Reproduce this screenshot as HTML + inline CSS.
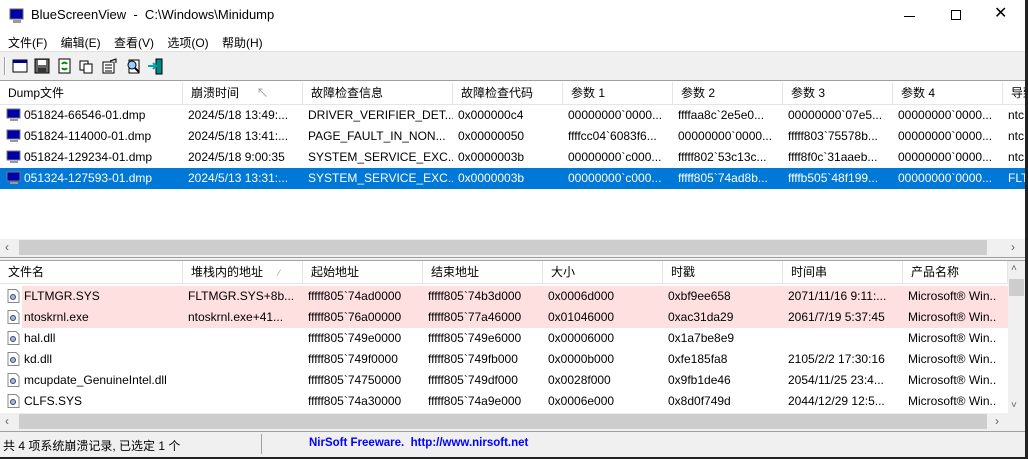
<!DOCTYPE html><html><head><meta charset="utf-8"><style>
*{margin:0;padding:0;box-sizing:border-box}
body{width:1028px;height:459px;overflow:hidden;background:#fff;font-family:"Liberation Sans","Noto Sans CJK SC",sans-serif;font-size:12px;color:#000;position:relative}
.a{position:absolute}
.row{position:absolute;left:0;height:21px;white-space:nowrap;overflow:hidden}
.row span{position:absolute;top:0;line-height:21px;overflow:hidden}
.hdr{position:absolute;left:0;height:23px;background:#fff;border-bottom:1px solid #e5e5e5;overflow:hidden;white-space:nowrap}
.hdr span{position:absolute;top:0;line-height:23px;padding-left:8px;border-right:1px solid #e5e5e5;height:23px}
.ico{position:absolute;left:6px;top:3px;width:15px;height:14px}
</style></head><body>
<svg class="a" style="left:9px;top:8px" width="16" height="16"><rect x="1" y="1" width="13" height="10" fill="#0000a8" stroke="#666"/><rect x="4" y="12" width="8" height="3" fill="#999"/></svg>
<div class="a" style="left:31px;top:7px;font-size:13px">BlueScreenView &nbsp;- &nbsp;C:\Windows\Minidump</div>
<div class="a" style="left:904px;top:16px;width:11px;height:1px;background:#000"></div>
<div class="a" style="left:951px;top:10px;width:10px;height:10px;border:1px solid #000"></div>
<div class="a" style="left:994px;top:4px;font-size:16px;line-height:20px">✕</div>
<div class="a" style="left:1025px;top:0;width:3px;height:459px;background:#222"></div>
<div class="a" style="left:8px;top:34px;font-size:12px">文件(F)&nbsp;&nbsp;&nbsp;&nbsp;编辑(E)&nbsp;&nbsp;&nbsp;&nbsp;查看(V)&nbsp;&nbsp;&nbsp;&nbsp;选项(O)&nbsp;&nbsp;&nbsp;&nbsp;帮助(H)</div>
<div class="a" style="left:0;top:51px;width:1025px;height:30px;background:#f0f0f0;border-top:1px solid #e0e0e0;border-bottom:1px solid #a0a0a0"></div>
<div class="a" style="left:4px;top:57px;width:2px;height:18px;border-left:1px solid #a0a0a0;border-right:1px solid #fff"></div>
<svg class="a" style="left:12px;top:58px" width="160" height="18">
<rect x="1" y="2" width="14" height="12" fill="#fff" stroke="#000"/><rect x="1" y="2" width="14" height="3" fill="#000080"/>
<rect x="23" y="1" width="14" height="14" fill="#666" stroke="#000"/><rect x="26" y="2" width="8" height="5" fill="#fff"/><rect x="26" y="10" width="8" height="5" fill="#333"/>
<rect x="47" y="1" width="11" height="14" fill="#fff" stroke="#000"/><path d="M50 6 a3 3 0 0 1 5 0 M55 10 a3 3 0 0 1 -5 0" stroke="#080" stroke-width="2" fill="none"/>
<rect x="68" y="3" width="8" height="9" fill="#fff" stroke="#000"/><rect x="72" y="6" width="8" height="9" fill="#fff" stroke="#000"/>
<rect x="91" y="4" width="11" height="11" fill="#fff" stroke="#000"/><path d="M93 7h7M93 10h7M93 13h7" stroke="#000"/><path d="M98 3l6-2v4" stroke="#000" fill="#ccc"/>
<rect x="117" y="2" width="10" height="13" fill="#fff" stroke="#000"/><circle cx="120" cy="7" r="4" fill="#9cf" stroke="#000"/><path d="M123 10l4 4" stroke="#000" stroke-width="2"/>
<rect x="144" y="1" width="6" height="15" fill="#088" stroke="#000"/><path d="M136 8h8M141 5l3 3-3 3" stroke="#0aa" stroke-width="2" fill="none"/>
</svg>
<div class="hdr" style="top:82px;width:1025px">
<span style="left:0;width:183px">Dump文件</span><span style="left:183px;width:120px">崩溃时间 <span style="position:static;border:0;color:#999;padding-left:14px">↖</span></span><span style="left:303px;width:150px">故障检查信息</span><span style="left:453px;width:110px">故障检查代码</span><span style="left:563px;width:110px">参数 1</span><span style="left:673px;width:110px">参数 2</span><span style="left:783px;width:110px">参数 3</span><span style="left:893px;width:110px">参数 4</span><span style="left:1003px;width:30px">导致</span>
</div>
<div id="up"></div>
<div class="a" style="left:0;top:239px;width:1025px;height:18px;background:#f0f0f0"></div>
<div class="a" style="left:19px;top:240px;width:968px;height:15px;background:#cdcdcd"></div>
<div class="a" style="left:5px;top:240px;color:#606060;font-size:12px">‹</div>
<div class="a" style="left:1011px;top:240px;color:#606060;font-size:12px">›</div>
<div class="a" style="left:0;top:257px;width:1025px;height:4px;background:#f0f0f0;border-top:1px solid #a0a0a0;border-bottom:1px solid #a0a0a0"></div>
<div class="hdr" style="top:261px;width:1008px">
<span style="left:0;width:183px">文件名</span><span style="left:183px;width:120px">堆栈内的地址 <span style="position:static;border:0;color:#999;padding-left:12px;font-size:9px">⁄</span></span><span style="left:303px;width:120px">起始地址</span><span style="left:423px;width:120px">结束地址</span><span style="left:543px;width:120px">大小</span><span style="left:663px;width:120px">时戳</span><span style="left:783px;width:120px">时间串</span><span style="left:903px;width:105px">产品名称</span>
</div>
<div id="lo"></div>
<div class="a" style="left:1008px;top:261px;width:17px;height:152px;background:#f0f0f0"></div>
<div class="a" style="left:1009px;top:279px;width:15px;height:17px;background:#cdcdcd"></div>
<div class="a" style="left:1011px;top:263px;color:#606060;font-size:10px">˄</div>
<div class="a" style="left:1011px;top:400px;color:#606060;font-size:10px">˅</div>
<div class="a" style="left:0;top:413px;width:1008px;height:18px;background:#f0f0f0"></div>
<div class="a" style="left:19px;top:414px;width:968px;height:15px;background:#cdcdcd"></div>
<div class="a" style="left:5px;top:414px;color:#606060">‹</div>
<div class="a" style="left:995px;top:414px;color:#606060">›</div>
<div class="a" style="left:1008px;top:413px;width:17px;height:18px;background:#f0f0f0"></div>
<div class="a" style="left:0;top:431px;width:1025px;height:26px;background:#f0f0f0;border-top:1px solid #a0a0a0"></div>
<div class="a" style="left:3px;top:437px">共 4 项系统崩溃记录, 已选定 1 个</div>
<div class="a" style="left:261px;top:434px;width:1px;height:20px;background:#a0a0a0"></div>
<div class="a" style="left:309px;top:437px;color:#0000ff;font-weight:bold;font-size:11.5px">NirSoft Freeware.&nbsp; http://www.nirsoft.net</div>
<div class="a" style="left:0;top:457px;width:1028px;height:2px;background:#222"></div>
<script>
var up=[["051824-66546-01.dmp","2024/5/18 13:49:...","DRIVER_VERIFIER_DET...","0x000000c4","00000000`0000...","ffffaa8c`2e5e0...","00000000`07e5...","00000000`0000...","ntc"],
["051824-114000-01.dmp","2024/5/18 13:41:...","PAGE_FAULT_IN_NON...","0x00000050","ffffcc04`6083f6...","00000000`0000...","fffff803`75578b...","00000000`0000...","ntc"],
["051824-129234-01.dmp","2024/5/18 9:00:35","SYSTEM_SERVICE_EXC...","0x0000003b","00000000`c000...","fffff802`53c13c...","ffff8f0c`31aaeb...","00000000`0000...","ntc"],
["051324-127593-01.dmp","2024/5/13 13:31:...","SYSTEM_SERVICE_EXC...","0x0000003b","00000000`c000...","fffff805`74ad8b...","ffffb505`48f199...","00000000`0000...","FLT"]];
var ux=[24,188,308,458,568,678,788,898,1008];
var uw=[155,112,145,105,105,105,105,105,17];
var h="";
up.forEach(function(r,i){var sel=i==3;h+='<div class="row" style="top:'+(105+i*21)+'px;width:1025px;'+(sel?'background:#0078d7;color:#fff':'')+'">';
h+='<svg class="ico" width="15" height="14"><rect x="1" y="1" width="13" height="9" fill="#0000a8" stroke="#777"/><rect x="4" y="11" width="8" height="2" fill="#999"/></svg>';
r.forEach(function(c,j){h+='<span style="left:'+ux[j]+'px;width:'+uw[j]+'px">'+c+'</span>'});h+='</div>'});
document.getElementById('up').innerHTML=h;
var lo=[["FLTMGR.SYS","FLTMGR.SYS+8b...","fffff805`74ad0000","fffff805`74b3d000","0x0006d000","0xbf9ee658","2071/11/16 9:11:...","Microsoft® Win..",1],
["ntoskrnl.exe","ntoskrnl.exe+41...","fffff805`76a00000","fffff805`77a46000","0x01046000","0xac31da29","2061/7/19 5:37:45","Microsoft® Win..",1],
["hal.dll","","fffff805`749e0000","fffff805`749e6000","0x00006000","0x1a7be8e9","","Microsoft® Win..",0],
["kd.dll","","fffff805`749f0000","fffff805`749fb000","0x0000b000","0xfe185fa8","2105/2/2 17:30:16","Microsoft® Win..",0],
["mcupdate_GenuineIntel.dll","","fffff805`74750000","fffff805`749df000","0x0028f000","0x9fb1de46","2054/11/25 23:4...","Microsoft® Win..",0],
["CLFS.SYS","","fffff805`74a30000","fffff805`74a9e000","0x0006e000","0x8d0f749d","2044/12/29 12:5...","Microsoft® Win..",0]];
var lx=[24,188,308,428,548,668,788,908];
h="";
lo.forEach(function(r,i){h+='<div class="row" style="top:'+(286+i*21)+'px;width:1008px;">';
if(r[8])h+='<div style="position:absolute;left:22px;top:0;width:986px;height:21px;background:#ffe0e0"></div>';
h+='<svg class="ico" width="15" height="14" style="left:7px;top:3px"><path d="M1 0.5h8l3 3v10h-11z" fill="#fff" stroke="#888"/><circle cx="6" cy="8" r="2.5" fill="#9bd" stroke="#446"/></svg>';
for(var j=0;j<8;j++)h+='<span style="left:'+lx[j]+'px;width:'+(j==0?158:115)+'px">'+r[j]+'</span>';h+='</div>'});
document.getElementById('lo').innerHTML=h;
</script>
</body></html>
